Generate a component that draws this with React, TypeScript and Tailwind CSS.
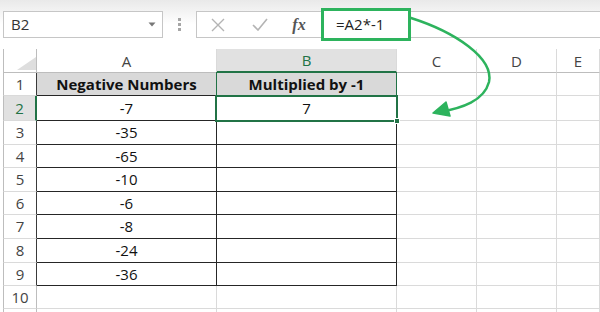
import React from "react";

const font = { fontFamily: '"Open Sans", "Liberation Sans", sans-serif' };

const cols = [
  { key: "A", w: "w-[180px]" },
  { key: "B", w: "w-[180px]" },
  { key: "C", w: "w-[80px]" },
  { key: "D", w: "w-[80px]" },
  { key: "E", w: "flex-1" },
];

const rowHeights = [
  "h-[23px]",
  "h-[25px]",
  "h-[24px]",
  "h-[23px]",
  "h-[24px]",
  "h-[23px]",
  "h-[24px]",
  "h-[24px]",
  "h-[23px]",
  "h-[23px]",
  "h-[10px]",
];

const values = ["-7", "-35", "-65", "-10", "-6", "-8", "-24", "-36"];

function cellValue(row: number, col: string) {
  if (row === 1 && col === "A") return "Negative Numbers";
  if (row === 1 && col === "B") return "Multiplied by -1";
  if (row >= 2 && row <= 9 && col === "A") return values[row - 2];
  if (row === 2 && col === "B") return "7";
  return "";
}

function Toolbar() {
  return (
    <div className="h-[49px] bg-gradient-to-b from-[#e9e9e9] via-white to-white flex items-start pt-[11px] pl-[3px]">
      <div className="w-[160px] h-[27px] border border-[#c6c6c6] bg-white flex items-center justify-between pl-[7px] pr-[6px]">
        <span className="text-[15px] text-[#333]">B2</span>
        <svg width="8" height="5" viewBox="0 0 8 5">
          <path d="M0.5 0.5 L7.5 0.5 L4 4.5 Z" fill="#777" />
        </svg>
      </div>
      <div className="w-[33px] h-[27px] flex flex-col items-center justify-center gap-[2px]">
        <span className="w-[3px] h-[3px] bg-[#a6a6a6]" />
        <span className="w-[3px] h-[3px] bg-[#a6a6a6]" />
        <span className="w-[3px] h-[3px] bg-[#a6a6a6]" />
      </div>
      <div className="flex-1 h-[27px] border border-r-0 border-[#c6c6c6] bg-white flex items-center">
        <div className="w-[42px] flex justify-center">
          <svg width="14" height="14" viewBox="0 0 14 14">
            <path d="M1 1 L13 13 M13 1 L1 13" stroke="#b4b4b4" strokeWidth="1.4" />
          </svg>
        </div>
        <div className="w-[42px] flex justify-center">
          <svg width="16" height="13" viewBox="0 0 16 13">
            <path d="M1 7 L6 12 L15 1" stroke="#b4b4b4" strokeWidth="1.6" fill="none" />
          </svg>
        </div>
        <div className="w-[36px] flex justify-center">
          <span className="text-[16px] italic font-bold text-[#555]" style={{ fontFamily: '"Liberation Serif", serif' }}>
            fx
          </span>
        </div>
        <div className="w-[4px]" />
        <div className="w-[90px] h-[33px] -my-[4px] border-[3px] border-[#2db35d] bg-white flex items-center pl-[12px] relative z-10">
          <span className="text-[15px] text-[#222]">=A2*-1</span>
        </div>
      </div>
    </div>
  );
}

function HeaderRow() {
  return (
    <div className="flex h-[24px]">
      <div className="w-[34px] border-l border-r border-b border-[#bdbdbd] relative">
        <svg className="absolute left-[13px] top-[8px]" width="19" height="13" viewBox="0 0 19 13">
          <path d="M19 0 L19 13 L0 13 Z" fill="#dedede" />
        </svg>
      </div>
      {cols.map((c) => {
        const sel = c.key === "B";
        return (
          <div
            key={c.key}
            className={`${c.w} flex items-end justify-center pb-[1px] border-r border-[#dadada] ${
              sel
                ? "bg-[#e1e1e1] text-[#217346] border-b-2 border-b-[#217346]"
                : "text-[#444] border-b border-b-[#bdbdbd]"
            }`}
          >
            <span className="text-[15px] leading-[20px]">{c.key}</span>
          </div>
        );
      })}
    </div>
  );
}

function Row({ n }: { n: number }) {
  const inTable = n >= 1 && n <= 9;
  const sel = n === 2;
  return (
    <div className={`flex ${rowHeights[n - 1]}`}>
      <div
        className={`w-[34px] border-l border-l-[#bdbdbd] border-b border-b-[#dadada] flex items-center justify-center ${
          sel
            ? "bg-[#e1e1e1] text-[#217346] border-r-2 border-r-[#217346]"
            : inTable
            ? "text-[#444] border-r border-r-[#3a3a3a]"
            : "text-[#444] border-r border-r-[#bdbdbd]"
        }`}
      >
        {n <= 10 && <span className="text-[15px] leading-none">{n}</span>}
      </div>
      {cols.map((c) => {
        const tableCell = inTable && (c.key === "A" || c.key === "B");
        const header = n === 1 && tableCell;
        return (
          <div
            key={c.key}
            className={`${c.w} flex items-center justify-center border-r border-b ${
              tableCell ? "border-[#262626]" : "border-[#dadada]"
            } ${header ? "bg-[#d9d9d9] font-bold text-[#111]" : "text-[#111]"}`}
          >
            <span className="text-[15px] leading-none">{cellValue(n, c.key)}</span>
          </div>
        );
      })}
    </div>
  );
}

function Arrow() {
  return (
    <svg className="absolute left-0 top-0 pointer-events-none z-20" width="600" height="312" viewBox="0 0 600 312">
      <path
        d="M411 18 C455 32 494 58 489 82 C484 101 462 108 440 112"
        stroke="#2db35d"
        strokeWidth="2.5"
        fill="none"
        strokeLinecap="round"
      />
      <path d="M446 102 L433 113 L450 116 Z" fill="#2db35d" stroke="#2db35d" strokeWidth="1.5" strokeLinejoin="round" />
    </svg>
  );
}

export default function App() {
  return (
    <div className="relative w-[600px] h-[312px] overflow-hidden bg-white" style={font}>
      <Toolbar />
      <div className="flex flex-col pl-[3px] relative">
        <HeaderRow />
        {Array.from({ length: 11 }, (_, i) => (
          <Row key={i} n={i + 1} />
        ))}
        {/* selection outline on B1:B2 */}
        <div className="absolute left-[216px] top-[23px] w-[181px] h-[24px] border border-[#217346]" />
        <div className="absolute left-[215px] top-[46px] w-[183px] h-[27px] border-2 border-[#217346]" />
        <div className="absolute left-[394px] top-[69px] w-[6px] h-[6px] bg-[#217346] border border-white" />
      </div>
      <Arrow />
    </div>
  );
}
